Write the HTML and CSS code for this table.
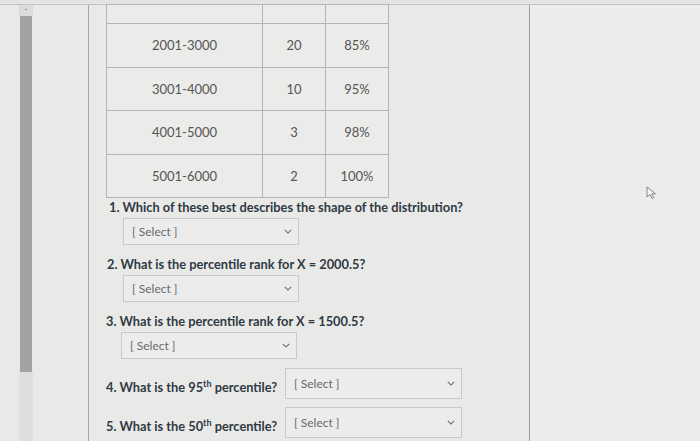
FILE: index.html
```html
<!DOCTYPE html>
<html>
<head>
<meta charset="utf-8">
<link rel="stylesheet" href="styles.css">
</head>
<body>
<div class="topgap"></div>
<div class="frame">
  <div class="rail">
    <div class="scroll-arrow">-</div>
    <div class="thumb"></div>
    <div class="track"></div>
  </div>
  <div class="main">
    <table class="dist">
      <tr class="partial"><td class="c1"></td><td class="c2"></td><td class="c3"></td></tr>
      <tr><td class="c1">2001-3000</td><td class="c2">20</td><td class="c3">85%</td></tr>
      <tr><td class="c1">3001-4000</td><td class="c2">10</td><td class="c3">95%</td></tr>
      <tr><td class="c1">4001-5000</td><td class="c2">3</td><td class="c3">98%</td></tr>
      <tr><td class="c1">5001-6000</td><td class="c2">2</td><td class="c3">100%</td></tr>
    </table>
    <div class="questions">
      <div class="q">
        <div class="qtext">1. Which of these best describes the shape of the distribution?</div>
        <div class="select"><span>[ Select ]</span><svg class="chev" viewBox="0 0 10 6" width="8" height="5"><path d="M1 1 L5 5 L9 1" fill="none" stroke="#666" stroke-width="1.3"/></svg></div>
      </div>
      <div class="q">
        <div class="qtext">2. What is the percentile rank for X = 2000.5?</div>
        <div class="select"><span>[ Select ]</span><svg class="chev" viewBox="0 0 10 6" width="8" height="5"><path d="M1 1 L5 5 L9 1" fill="none" stroke="#666" stroke-width="1.3"/></svg></div>
      </div>
      <div class="q">
        <div class="qtext">3. What is the percentile rank for X = 1500.5?</div>
        <div class="select"><span>[ Select ]</span><svg class="chev" viewBox="0 0 10 6" width="8" height="5"><path d="M1 1 L5 5 L9 1" fill="none" stroke="#666" stroke-width="1.3"/></svg></div>
      </div>
      <div class="q inline first-inline">
        <div class="qtext">4. What is the 95<sup>th</sup> percentile?</div>
        <div class="select wide"><span>[ Select ]</span><svg class="chev" viewBox="0 0 10 6" width="8" height="5"><path d="M1 1 L5 5 L9 1" fill="none" stroke="#666" stroke-width="1.3"/></svg></div>
      </div>
      <div class="q inline">
        <div class="qtext">5. What is the 50<sup>th</sup> percentile?</div>
        <div class="select wide"><span>[ Select ]</span><svg class="chev" viewBox="0 0 10 6" width="8" height="5"><path d="M1 1 L5 5 L9 1" fill="none" stroke="#666" stroke-width="1.3"/></svg></div>
      </div>
    </div>
  </div>
  <div class="right"></div>
</div>
<svg class="cursor" viewBox="0 0 12 14" width="12" height="14"><path d="M1 1 L1 11 L4 8.5 L6 12.5 L7.8 11.7 L5.8 7.8 L9.5 7.8 Z" fill="#f4f4f4" stroke="#777" stroke-width="0.9"/></svg>
</body>
</html>
```

FILE: styles.css
```css
html, body {
  margin: 0;
  padding: 0;
}
body {
  width: 700px;
  height: 441px;
  overflow: hidden;
  background: #e9e9e8;
  font-family: Lato, "Open Sans", Arial, sans-serif;
  position: relative;
}
.topgap {
  height: 4px;
  background: #e4e4e4;
}
.frame {
  display: flex;
  height: 436px;
  border-top: 1px solid #c4c4c4;
}
.rail {
  width: 89px;
  border-right: 1px solid #a8a8a8;
  display: flex;
  flex-direction: column;
  align-items: flex-start;
  padding-left: 19px;
  box-sizing: border-box;
}
.scroll-arrow {
  width: 14px;
  height: 11px;
  font-size: 8px;
  line-height: 8px;
  color: #666;
  text-align: center;
  background: #dcdcdc;
}
.thumb {
  width: 12px;
  height: 356px;
  background: #a2a2a2;
  margin-left: 1px;
}
.track {
  width: 14px;
  flex: 1;
  background: #dedede;
}
.main {
  width: 440px;
  border-right: 1px solid #9d9d9d;
}
.right {
  flex: 1;
  background: #ececec;
}
.dist {
  border-collapse: collapse;
  margin-left: 17px;
  margin-top: -1px;
  font-size: 13px;
  color: #555;
}
.dist td {
  border: 1px solid #b4b4b4;
  height: 42.5px;
  padding: 0;
  text-align: center;
  vertical-align: middle;
  background: #ebebea;
}
.dist tr.partial td {
  height: 18px;
}
.dist .c1 { width: 155px; }
.dist .c2 { width: 62px; }
.dist .c3 { width: 62px; }
.questions {
  margin-left: 20px;
  display: flex;
  flex-direction: column;
}
.q {
  display: flex;
  flex-direction: column;
}
.qtext {
  font-weight: 700;
  font-size: 12.8px;
  line-height: 18px;
  color: #2f3a44;
}
.qtext sup {
  font-size: 9px;
  line-height: 0;
}
.q .select {
  margin-top: 2px;
  margin-left: 14px;
  margin-bottom: 10px;
}
.q:nth-child(2) .qtext, .q:nth-child(3) .qtext { margin-left: -2px; }
.q:nth-child(3) .qtext { margin-left: -3px; }
.q:nth-child(3) .select { margin-left: 12px; }
.select {
  width: 176px;
  height: 27px;
  box-sizing: border-box;
  border: 1px solid #c9c9c9;
  background: #ececec;
  display: flex;
  align-items: center;
  justify-content: space-between;
  padding: 0 6px 0 8px;
  font-size: 12px;
  color: #6a6a6a;
}
.q.inline {
  flex-direction: row;
  align-items: center;
  margin-left: -3px;
}
.q.inline .qtext {
  margin-top: 7px;
  width: 179px;
}
.q.inline .select.wide {
  margin: 0;
  height: 31px;
  width: 177px;
  align-items: flex-start;
  padding-top: 7px;
}
.q.inline .select.wide .chev {
  margin-top: 5px;
}
.first-inline {
  margin-top: -1px;
}
.q.inline + .q.inline {
  margin-top: 8px;
}
.cursor {
  position: absolute;
  left: 646px;
  top: 186px;
}
```
